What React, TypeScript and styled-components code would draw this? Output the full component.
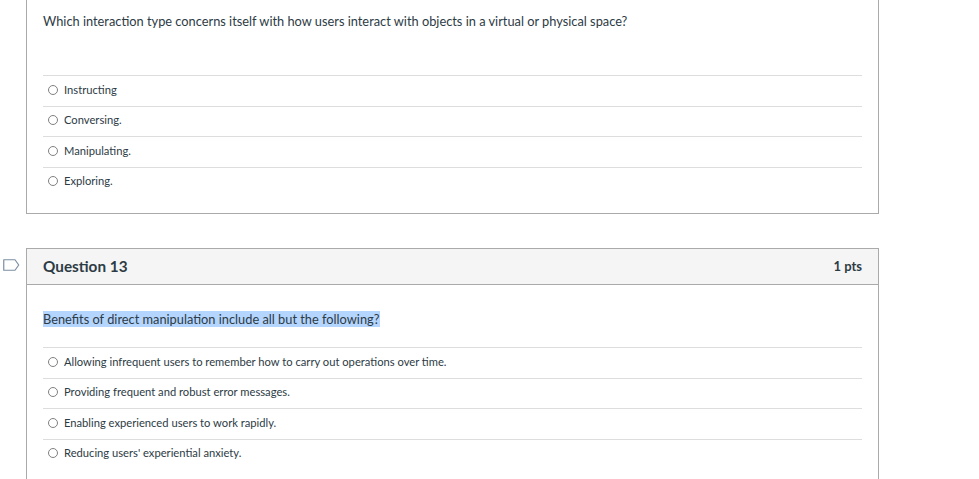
import React from "react";
import styled, { createGlobalStyle } from "styled-components";

const GlobalStyle = createGlobalStyle`
  html, body {
    margin: 0;
    padding: 0;
    background: #ffffff;
  }
  body {
    font-family: Lato, "Liberation Sans", sans-serif;
    color: #2d3b45;
    overflow: hidden;
  }
  ::selection {
    background: #b4d5fe;
  }
`;

interface Question {
  number?: number;
  points?: number;
  text: string;
  highlighted?: boolean;
  answers: string[];
}

const questions: Question[] = [
  {
    text: "Which interaction type concerns itself with how users interact with objects in a virtual or physical space?",
    answers: ["Instructing", "Conversing.", "Manipulating.", "Exploring."],
  },
  {
    number: 13,
    points: 1,
    text: "Benefits of direct manipulation include all but the following?",
    highlighted: true,
    answers: [
      "Allowing infrequent users to remember how to carry out operations over time.",
      "Providing frequent and robust error messages.",
      "Enabling experienced users to work rapidly.",
      "Reducing users' experiential anxiety.",
    ],
  },
];

const Page = styled.div`
  display: flex;
  flex-direction: column;
  gap: 34px;
  margin-top: -40px;
`;

const QuestionRow = styled.div`
  display: flex;
  align-items: flex-start;
`;

const FlagColumn = styled.div`
  width: 26px;
  flex-shrink: 0;
  display: flex;
  justify-content: flex-start;
  padding-top: 11px;
  padding-left: 3px;
  box-sizing: border-box;
`;

const Card = styled.div`
  width: 853px;
  border: 1px solid #aaaaaa;
  box-sizing: border-box;
  background: #fff;
`;

const Header = styled.div`
  height: 35px;
  background: #f5f5f5;
  border-bottom: 1px solid #aaaaaa;
  display: flex;
  align-items: center;
  justify-content: space-between;
  padding: 0 16px;
`;

const Title = styled.div`
  font-size: 15.3px;
  font-weight: 700;
  color: #2d3b45;
  margin-top: -1px;
`;

const Points = styled.div`
  font-size: 13px;
  font-weight: 700;
  color: #2d3b45;
  margin-top: -1px;
`;

const Body = styled.div<{ $top: number; $gap: number }>`
  padding: ${(p) => p.$top}px 16px 16px 16px;
  display: flex;
  flex-direction: column;
  gap: ${(p) => p.$gap}px;
`;

const Prompt = styled.div`
  font-size: 12.8px;
  line-height: 16px;
`;

const Mark = styled.span<{ $on?: boolean }>`
  background: ${(p) => (p.$on ? "#b4d5fe" : "transparent")};
  padding: 0 1px 0 0;
`;

const Answers = styled.div`
  display: flex;
  flex-direction: column;
`;

const Answer = styled.label`
  box-sizing: border-box;
  height: 30.5px;
  border-top: 1px solid #dddddd;
  display: flex;
  align-items: center;
  gap: 6px;
  padding-left: 5px;
  padding-bottom: 3px;
  font-size: 11.2px;
  color: #2d3b45;
`;

const Radio = styled.span`
  width: 8px;
  height: 8px;
  border: 1px solid #808080;
  border-radius: 50%;
  flex-shrink: 0;
  margin-top: 1px;
`;

const Flag = () => (
  <svg width="17" height="12" viewBox="0 0 17 12">
    <path
      d="M0.75 0.75 H12 L15.75 6 L12 11.25 H0.75 Z"
      fill="none"
      stroke="#7b8ea3"
      strokeWidth="1.2"
      strokeLinejoin="round"
    />
  </svg>
);

export default function App() {
  return (
    <>
      <GlobalStyle />
      <Page>
        {questions.map((q, i) => (
          <QuestionRow key={i}>
            <FlagColumn>{q.number ? <Flag /> : null}</FlagColumn>
            <Card>
              {q.number ? (
                <Header>
                  <Title>Question {q.number}</Title>
                  <Points>{q.points} pts</Points>
                </Header>
              ) : null}
              <Body $top={q.number ? 26 : 52} $gap={q.number ? 20 : 46}>
                <Prompt>
                  <Mark $on={q.highlighted}>{q.text}</Mark>
                </Prompt>
                <Answers>
                  {q.answers.map((a) => (
                    <Answer key={a}>
                      <Radio />
                      {a}
                    </Answer>
                  ))}
                </Answers>
              </Body>
            </Card>
          </QuestionRow>
        ))}
      </Page>
    </>
  );
}
